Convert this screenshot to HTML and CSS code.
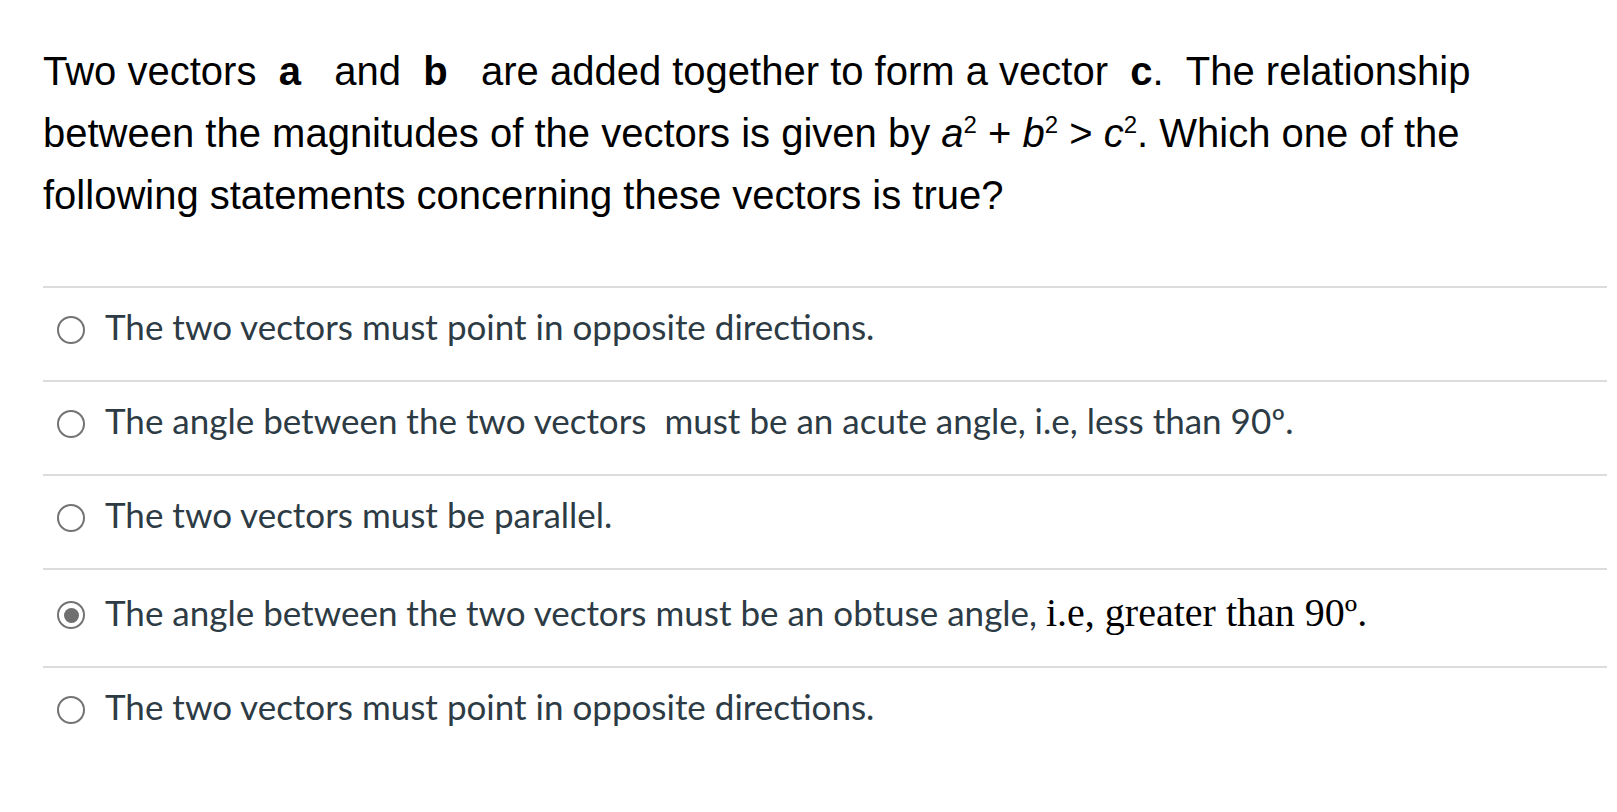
FILE: index.html
```html
<!DOCTYPE html>
<html>
<head>
<meta charset="utf-8">
<link rel="stylesheet" href="styles.css">
</head>
<body>
<div class="quiz">
  <div class="question">
    <p>Two vectors &nbsp;<b>a</b> &nbsp; and &nbsp;<b>b</b> &nbsp; are added together to form a vector &nbsp;<b>c</b>. &nbsp;The relationship between the magnitudes of the vectors is given by <i>a</i><sup>2</sup> + <i>b</i><sup>2</sup> &gt; <i>c</i><sup>2</sup>. Which one of the following statements concerning these vectors is true?</p>
  </div>
  <div class="answers">
    <label class="answer"><span class="radio"></span><span class="text">The two vectors must point in opposite directions.</span></label>
    <label class="answer"><span class="radio"></span><span class="text">The angle between the two vectors &nbsp;must be an acute angle, i.e, less than 90º.</span></label>
    <label class="answer"><span class="radio"></span><span class="text">The two vectors must be parallel.</span></label>
    <label class="answer answer-mixed"><span class="radio checked"></span><span class="text">The angle between the two vectors must be an obtuse angle, <span class="serif">i.e, greater than 90º.</span></span></label>
    <label class="answer"><span class="radio"></span><span class="text">The two vectors must point in opposite directions.</span></label>
  </div>
</div>
</body>
</html>
```

FILE: styles.css
```css
html, body {
  margin: 0;
  padding: 0;
  background: #ffffff;
}
.quiz {
  padding: 0 10px 0 43px;
}
.question p {
  margin: 0;
  padding-top: 40px;
  font-family: "Liberation Sans", Arial, sans-serif;
  font-size: 40px;
  line-height: 62px;
  color: #000000;
  width: 1440px;
}
.question sup {
  font-size: 60%;
  line-height: 0;
  vertical-align: 0.6em;
}
.answers {
  margin-top: 60px;
}
.answer {
  display: flex;
  align-items: flex-start;
  gap: 20px;
  border-top: 2px solid #dcdcdc;
  padding: 17px 0 33px 14px;
  font-family: Lato, sans-serif;
  font-size: 35px;
  line-height: 42px;
  color: #2d3b45;
}
.answer-mixed {
  padding-top: 20px;
  padding-bottom: 31px;
}
.radio {
  width: 24px;
  height: 24px;
  border: 2.5px solid #737373;
  border-radius: 50%;
  flex: none;
  display: flex;
  align-items: center;
  justify-content: center;
  margin-top: 11px;
}
.radio.checked {
  margin-top: 11px;
}
.radio.checked::after {
  content: "";
  width: 15px;
  height: 15px;
  border-radius: 50%;
  background: #6f6f6f;
}
.serif {
  font-family: "Liberation Serif", "Times New Roman", serif;
  color: #000;
  font-size: 40px;
  line-height: 45px;
}
```
